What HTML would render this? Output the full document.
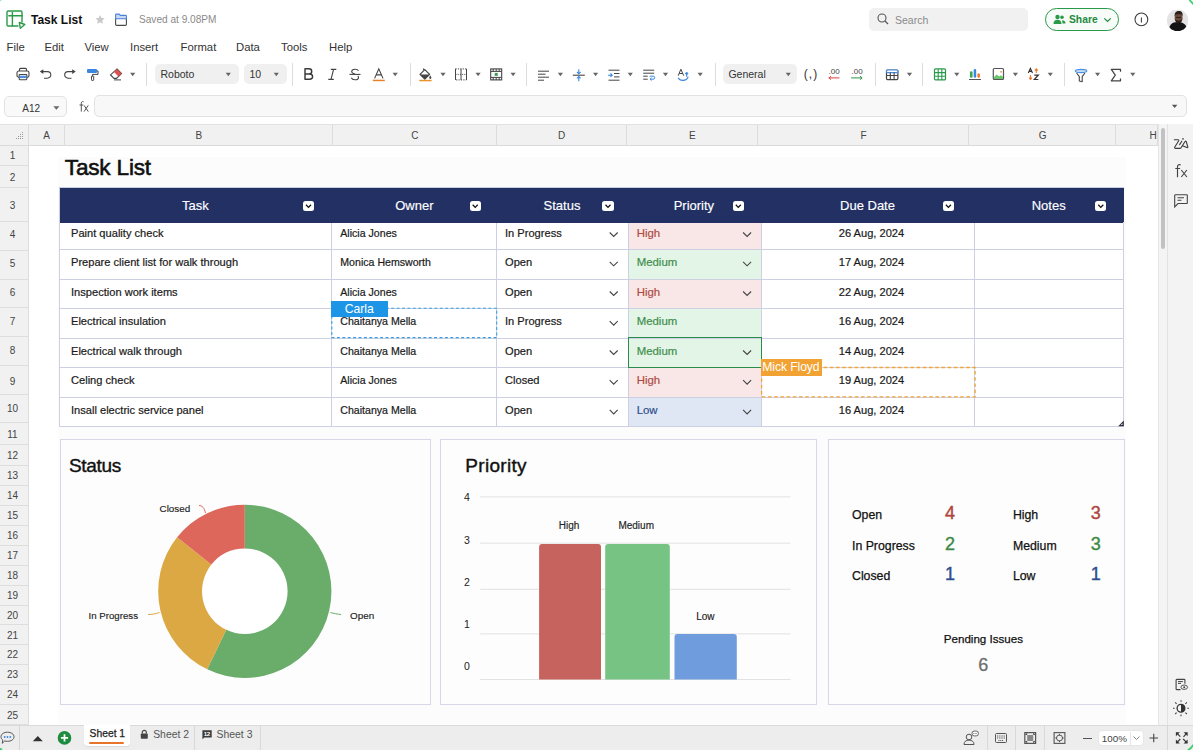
<!DOCTYPE html>
<html><head><meta charset="utf-8">
<style>
*{margin:0;padding:0;box-sizing:border-box}
html,body{width:1193px;height:750px;overflow:hidden;background:#fff;font-family:"Liberation Sans",sans-serif;color:#222}
.a{position:absolute}
.t{position:absolute;white-space:nowrap;line-height:1}
svg{position:absolute;overflow:visible}
.menu{font-size:11.3px;color:#333}
.rh{position:absolute;left:0;width:28px;background:#f1f1f1;border-bottom:1px solid #dedede;font-size:10px;color:#555;text-align:center}
.ch{position:absolute;top:125px;height:20px;background:#f1f1f1;border-right:1px solid #dcdcdc;border-bottom:1px solid #dcdcdc;font-size:10px;color:#444;text-align:center;line-height:20px}
.cell{position:absolute;font-size:11.1px;color:#1a1a1a;white-space:nowrap;line-height:1;-webkit-text-stroke:0.2px currentColor}
.hdr{position:absolute;top:197px;font-size:13px;color:#fff;white-space:nowrap;line-height:1;text-align:center}
.flt{position:absolute;top:201px;width:11px;height:10px;background:#fff;border-radius:2px}
.dd{position:absolute;width:9px;height:5px}
</style></head><body>

<!-- ===== TITLE BAR ===== -->
<svg style="left:5px;top:9px" width="22" height="22" viewBox="0.000 0.000 22.000 22.000">
 <path d="M13 17H3.2C2.5 17 2 16.5 2 15.8V3.2C2 2.5 2.5 2 3.2 2H15.8C16.5 2 17 2.5 17 3.2V13" fill="none" stroke="#2a9a4a" stroke-width="1.4" stroke-linecap="round"/>
 <path d="M7.4 3V17.5M3.3 6.7H17.8" fill="none" stroke="#2a9a4a" stroke-width="1.4"/>
 <path d="M14.3 13.5L19.8 15.5L15.3 19.2Z" fill="none" stroke="#2a9a4a" stroke-width="1.4" stroke-linejoin="round"/>
</svg>
<div class="t" style="left:31px;top:13.5px;font-size:12px;font-weight:bold;color:#111">Task List</div>
<svg style="left:94px;top:14px" width="12" height="11" viewBox="-1.811 -0.679 27.170 24.906"><path d="M12 1.5l3.2 6.8 7.3.9-5.4 5 1.4 7.3L12 17.9l-6.5 3.6 1.4-7.3-5.4-5 7.3-.9z" fill="#c9c9c9"/></svg>
<svg style="left:115px;top:13px" width="12" height="13" viewBox="0.000 -0.500 12.000 13.000"><path d="M0.6 5.2V10.8Q0.6 11.9 1.7 11.9H10.3Q11.4 11.9 11.4 10.8V5.2" fill="none" stroke="#4a4a4a" stroke-width="1.1"/><path d="M0.6 5.2V1.4Q0.6 0.6 1.4 0.6H4.2L5.3 1.9H10.6Q11.4 1.9 11.4 2.7V5.2Z" fill="#c7d8f4" stroke="#4a80d8" stroke-width="1.1" stroke-linejoin="round"/></svg>
<div class="t" style="left:139px;top:15px;font-size:10.1px;color:#8a8a8a">Saved at 9.08PM</div>

<div class="a" style="left:869px;top:8px;width:159px;height:23px;background:#f1f1f1;border-radius:5px"></div>
<svg style="left:877px;top:13px" width="12" height="12" viewBox="0.000 0.000 12.000 12.000"><circle cx="5" cy="5" r="4" fill="none" stroke="#555" stroke-width="1.1"/><path d="M8 8L11 11" stroke="#555" stroke-width="1.2"/></svg>
<div class="t" style="left:895px;top:15px;font-size:10.5px;color:#8a8a8a">Search</div>

<div class="a" style="left:1045px;top:8px;width:74px;height:23px;border:1px solid #2a9a4a;border-radius:12px;background:#f7fcf8"></div>
<svg style="left:1053px;top:14px" width="13" height="11" viewBox="0.000 0.000 13.000 11.000"><circle cx="4.5" cy="3" r="2.2" fill="#2a9a4a"/><path d="M0.5 10C0.5 7 2.2 5.8 4.5 5.8S8.5 7 8.5 10Z" fill="#2a9a4a"/><circle cx="9" cy="3.3" r="1.8" fill="#2a9a4a"/><path d="M9 6.2C11 6.2 12.5 7.2 12.5 9.6H9.6" fill="#2a9a4a"/></svg>
<div class="t" style="left:1069px;top:14.8px;font-size:10.3px;font-weight:bold;color:#1f8a40">Share</div>
<svg style="left:1103px;top:17px" width="9" height="6" viewBox="-0.500 -0.500 9.000 6.000"><path d="M0.8 0.8L4 4L7.2 0.8" fill="none" stroke="#1f8a40" stroke-width="1.2"/></svg>

<svg style="left:1134px;top:12px" width="15" height="15" viewBox="-0.400 -0.400 15.000 15.000"><circle cx="7" cy="7" r="6.4" fill="none" stroke="#3a3a3a" stroke-width="1.05"/><path d="M7 5V10.2" stroke="#3a3a3a" stroke-width="1.05"/></svg>
<svg style="left:1166px;top:9px" width="23" height="23" viewBox="-0.800 -0.600 23.000 23.000"><defs><clipPath id="av"><circle cx="10.75" cy="10.75" r="10.75"/></clipPath></defs><g clip-path="url(#av)"><rect width="21.5" height="21.5" fill="#e4e4e4"/><path d="M2 22C2 15.5 5 12.5 10.5 12.5C15.5 12.5 19 14.5 20 18L21.5 22Z" fill="#141414"/><ellipse cx="11.8" cy="8.3" rx="4" ry="5" fill="#6b4a3c"/><path d="M7.8 7C7.6 3.2 9.5 1.5 12 1.5C14.8 1.5 16.3 3.3 15.8 7L15 5.2C13.5 4.6 10 4.6 8.6 5.3Z" fill="#2a1f1a"/><path d="M8.2 9.5C8.6 12.5 10 13.6 11.8 13.6C13.6 13.6 15 12.5 15.4 9.5C14.5 10.8 13 11.2 11.8 11.2C10.6 11.2 9.1 10.8 8.2 9.5Z" fill="#2a1d18"/><rect x="9.3" y="7.3" width="5" height="1" fill="#2a1f1a"/></g></svg>

<!-- ===== MENU ===== -->
<div class="t menu" style="left:6.5px;top:41.8px">File</div>
<div class="t menu" style="left:44.5px;top:41.8px">Edit</div>
<div class="t menu" style="left:84.5px;top:41.8px">View</div>
<div class="t menu" style="left:130px;top:41.8px">Insert</div>
<div class="t menu" style="left:180.5px;top:41.8px">Format</div>
<div class="t menu" style="left:236px;top:41.8px">Data</div>
<div class="t menu" style="left:281px;top:41.8px">Tools</div>
<div class="t menu" style="left:329px;top:41.8px">Help</div>

<!-- TOOLBAR -->
<svg style="left:16px;top:67px" width="14" height="15" viewBox="0.000 -0.200 14.000 15.000"><path d="M3.5 3.8V2.2Q3.5 1.2 4.5 1.2H9.5Q10.5 1.2 10.5 2.2V3.8" fill="none" stroke="#444" stroke-width="1.1"/><rect x="1" y="3.8" width="12" height="6.2" rx="1.8" fill="none" stroke="#444" stroke-width="1.1"/><rect x="3.2" y="7.3" width="7.6" height="5.2" rx=".6" fill="#fff" stroke="#444" stroke-width="1.1"/><rect x="3.8" y="8.5" width="6.4" height="2.4" fill="#4a8fe0"/></svg>
<svg style="left:39px;top:67px" width="14" height="15" viewBox="0.000 -0.800 14.000 15.000"><path d="M3.5 3.8H8.5A3.3 3.3 0 0 1 8.5 10.4H5" fill="none" stroke="#444" stroke-width="1.1"/><path d="M0.8 3.8L4.3 1.5V6.1Z" fill="#444"/></svg>
<svg style="left:62px;top:67px" width="15" height="15" viewBox="-0.500 -0.800 15.000 15.000"><path d="M10.5 3.8H5.5A3.3 3.3 0 0 0 5.5 10.4H9" fill="none" stroke="#444" stroke-width="1.1"/><path d="M13.2 3.8L9.7 1.5V6.1Z" fill="#444"/></svg>
<svg style="left:85px;top:67px" width="15" height="15" viewBox="-0.500 -0.400 15.000 15.000"><rect x="1.5" y="1.5" width="10" height="4" rx="1" fill="#3a86e0"/><path d="M11.5 3.5H12.5V7H7V9" fill="none" stroke="#444" stroke-width="1"/><rect x="6" y="8.5" width="2.2" height="4.5" rx=".6" fill="none" stroke="#444" stroke-width="1"/></svg>
<svg style="left:109px;top:67px" width="14" height="15" viewBox="0.000 -0.400 14.000 15.000"><path d="M8 1.5L12.5 6L7.5 11H5L1.5 7.5Z" fill="none" stroke="#444" stroke-width="1.1"/><path d="M8 1.5L12.5 6L9.5 9L5 4.5Z" fill="#e05050"/><path d="M5 12.5H12" stroke="#444" stroke-width="1"/></svg>
<svg style="left:130px;top:72px" width="6" height="5" viewBox="-0.100 -0.800 6.000 5.000"><path d="M0 0H5.2L2.6 3.4Z" fill="#666"/></svg>
<div class="a" style="left:146.0px;top:62.5px;width:1px;height:23px;background:#dcdcdc"></div>
<div class="a" style="left:154.6px;top:64.3px;width:84.5px;height:19.7px;background:#f0f0f0;border-radius:5px"></div>
<div class="t" style="left:160.5px;top:69px;font-size:10.5px;color:#333">Roboto</div>
<svg style="left:225px;top:72px" width="6" height="5" viewBox="-0.700 -0.800 6.000 5.000"><path d="M0 0H5.2L2.6 3.4Z" fill="#666"/></svg>
<div class="a" style="left:244px;top:64.3px;width:42.6px;height:19.7px;background:#f0f0f0;border-radius:5px"></div>
<div class="t" style="left:249.5px;top:69px;font-size:10.5px;color:#333">10</div>
<svg style="left:273px;top:72px" width="6" height="5" viewBox="-0.700 -0.800 6.000 5.000"><path d="M0 0H5.2L2.6 3.4Z" fill="#666"/></svg>
<div class="a" style="left:291.5px;top:62.5px;width:1px;height:23px;background:#dcdcdc"></div>
<svg style="left:301px;top:66px" width="15" height="15" viewBox="-0.600 -0.900 15.000 15.000"><path d="M3.4 1.9H7.4Q10.1 1.9 10.1 4.5Q10.1 7 7.4 7H3.4ZM3.4 7H8Q11 7 11 9.7Q11 12.4 8 12.4H3.4Z" fill="none" stroke="#3a3a3a" stroke-width="1.45" stroke-linejoin="round"/></svg>
<svg style="left:325px;top:67px" width="15" height="15" viewBox="-0.300 -0.400 15.000 15.000"><path d="M5.5 2H11M3 12H8.5M8.3 2L5.7 12" fill="none" stroke="#444" stroke-width="1.1"/></svg>
<svg style="left:348px;top:67px" width="14" height="15" viewBox="0.000 -0.400 14.000 15.000"><path d="M10.5 3.5C10 2.3 8.8 1.8 7 1.8C5 1.8 3.7 2.8 3.7 4.2C3.7 5.5 4.8 6.2 7 6.6" fill="none" stroke="#444" stroke-width="1.1"/><path d="M1.5 7H12.5" stroke="#444" stroke-width="1.1"/><path d="M9.8 8.5C10.3 9 10.5 9.5 10.5 10C10.5 11.4 9.2 12.3 7 12.3C5 12.3 3.8 11.6 3.3 10.4" fill="none" stroke="#444" stroke-width="1.1"/></svg>
<svg style="left:371px;top:67px" width="15" height="15" viewBox="-0.800 -0.400 15.000 15.000"><path d="M2.8 11L7 1.5L11.2 11M4.3 7.5H9.7" fill="none" stroke="#444" stroke-width="1.1"/><rect x="1" y="12.3" width="12" height="1.5" fill="#e8822a"/></svg>
<svg style="left:392px;top:72px" width="6" height="5" viewBox="-0.600 -0.800 6.000 5.000"><path d="M0 0H5.2L2.6 3.4Z" fill="#666"/></svg>
<div class="a" style="left:409.5px;top:62.5px;width:1px;height:23px;background:#dcdcdc"></div>
<svg style="left:418px;top:67px" width="15" height="15" viewBox="-0.800 -0.400 15.000 15.000"><path d="M4.2 1.2L5.6 2.6" stroke="#444" stroke-width="1.1"/><path d="M1.2 7L6 2.2L10.8 7L6 11.8Z" fill="none" stroke="#444" stroke-width="1.2" stroke-linejoin="round"/><path d="M1.2 7H10.8L6 11.8Z" fill="#444"/><path d="M11.5 8.2C12.4 9.4 12.6 10 12.6 10.4A1.1 1.1 0 0 1 10.4 10.4C10.4 10 10.6 9.4 11.5 8.2Z" fill="#444"/><rect x="0.5" y="12.4" width="12.3" height="1.5" fill="#e8922a"/></svg>
<svg style="left:440px;top:72px" width="6" height="5" viewBox="-0.400 -0.800 6.000 5.000"><path d="M0 0H5.2L2.6 3.4Z" fill="#666"/></svg>
<svg style="left:454px;top:67px" width="14" height="15" viewBox="0.000 -0.400 14.000 15.000"><rect x="1.5" y="1.5" width="11" height="11" fill="none" stroke="#444" stroke-width="1" stroke-dasharray="1.2 1.2"/><path d="M7 1.5V12.5" stroke="#444" stroke-width="1"/><path d="M1.5 7H12.5" stroke="#444" stroke-width="1" stroke-dasharray="1 1.2"/><path d="M1.5 1.5V12.5M12.5 1.5V12.5" stroke="#444" stroke-width="1"/></svg>
<svg style="left:475px;top:72px" width="6" height="5" viewBox="-0.500 -0.800 6.000 5.000"><path d="M0 0H5.2L2.6 3.4Z" fill="#666"/></svg>
<svg style="left:489px;top:67px" width="15" height="15" viewBox="-0.200 -0.400 15.000 15.000"><rect x="1.5" y="1.5" width="11" height="11" fill="none" stroke="#444" stroke-width="1.1"/><path d="M1.5 4H12.5M1.5 10H12.5M4 1.5V4M7 1.5V4M10 1.5V4M4 10V12.5M7 10V12.5M10 10V12.5" stroke="#444" stroke-width="1"/><rect x="5.5" y="5.5" width="3" height="3" fill="#3aa050"/></svg>
<svg style="left:510px;top:72px" width="6" height="5" viewBox="-0.500 -0.800 6.000 5.000"><path d="M0 0H5.2L2.6 3.4Z" fill="#666"/></svg>
<div class="a" style="left:526.4px;top:62.5px;width:1px;height:23px;background:#dcdcdc"></div>
<svg style="left:536px;top:68px" width="15" height="15" viewBox="-0.500 -0.200 15.000 15.000"><path d="M1.5 3H12.5M1.5 6H9M1.5 9H12.5M1.5 12H7.5" stroke="#444" stroke-width="1"/></svg>
<svg style="left:557px;top:72px" width="6" height="5" viewBox="-0.800 -0.800 6.000 5.000"><path d="M0 0H5.2L2.6 3.4Z" fill="#666"/></svg>
<svg style="left:571px;top:68px" width="15" height="15" viewBox="-0.800 -0.200 15.000 15.000"><path d="M1 7H13" stroke="#444" stroke-width="1.1"/><path d="M7 1V5.5M7 8.5V13" stroke="#3a86e0" stroke-width="1.1"/><path d="M5.2 3.8L7 5.6L8.8 3.8M5.2 10.2L7 8.4L8.8 10.2" fill="none" stroke="#3a86e0" stroke-width="1.1"/></svg>
<svg style="left:593px;top:72px" width="6" height="5" viewBox="0.000 -0.800 6.000 5.000"><path d="M0 0H5.2L2.6 3.4Z" fill="#666"/></svg>
<svg style="left:607px;top:68px" width="14" height="15" viewBox="0.000 -0.200 14.000 15.000"><path d="M1.5 2H12.5M7 5.3H12.5M7 8.7H12.5M1.5 12H12.5" stroke="#444" stroke-width="1"/><path d="M1 7H5M3.5 5.3L5.2 7L3.5 8.7" fill="none" stroke="#3a86e0" stroke-width="1.1"/></svg>
<svg style="left:627px;top:72px" width="6" height="5" viewBox="-0.700 -0.800 6.000 5.000"><path d="M0 0H5.2L2.6 3.4Z" fill="#666"/></svg>
<svg style="left:641px;top:68px" width="15" height="15" viewBox="-0.700 -0.200 15.000 15.000"><path d="M1.5 2H12.5M1.5 5H12.5M1.5 8H6M1.5 11H6" stroke="#444" stroke-width="1"/><path d="M8 8H11.5A1.5 1.5 0 0 1 11.5 11H8.5M9.8 9.6L8.3 11L9.8 12.4" fill="none" stroke="#3a86e0" stroke-width="1"/></svg>
<svg style="left:662px;top:72px" width="7" height="5" viewBox="-0.900 -0.800 7.000 5.000"><path d="M0 0H5.2L2.6 3.4Z" fill="#666"/></svg>
<svg style="left:676px;top:68px" width="15" height="15" viewBox="-0.700 -0.200 15.000 15.000"><path d="M1.5 7.5L4.2 1L7 7.5M2.5 5.3H6" fill="none" stroke="#444" stroke-width="1"/><path d="M1.5 9.5C3 13 9.5 13.5 11.5 8.5" fill="none" stroke="#3a86e0" stroke-width="1.1"/><path d="M10 4.5V8.5M8.6 5.8L10 4.3L11.4 5.8" fill="none" stroke="#3a86e0" stroke-width="1.1"/></svg>
<svg style="left:697px;top:72px" width="6" height="5" viewBox="-0.600 -0.800 6.000 5.000"><path d="M0 0H5.2L2.6 3.4Z" fill="#666"/></svg>
<div class="a" style="left:714.6px;top:62.5px;width:1px;height:23px;background:#dcdcdc"></div>
<div class="a" style="left:723.4px;top:64.3px;width:73.6px;height:19.7px;background:#f0f0f0;border-radius:5px"></div>
<div class="t" style="left:728.4px;top:69px;font-size:10.5px;color:#333">General</div>
<svg style="left:785px;top:72px" width="6" height="5" viewBox="-0.700 -0.800 6.000 5.000"><path d="M0 0H5.2L2.6 3.4Z" fill="#666"/></svg>
<div class="t" style="left:803.8px;top:67.5px;font-size:12px;color:#333;letter-spacing:1px">(,)</div>
<svg style="left:826px;top:67px" width="15" height="15" viewBox="-0.500 -0.400 15.000 15.000"><text x="2" y="7" font-size="8" font-family="Liberation Sans" fill="#444">.00</text><path d="M2 10.5H13M4.5 8.8L2.5 10.5L4.5 12.2" fill="none" stroke="#e04040" stroke-width="1"/></svg>
<svg style="left:849px;top:67px" width="15" height="15" viewBox="-0.600 -0.400 15.000 15.000"><text x="2" y="7" font-size="8" font-family="Liberation Sans" fill="#444">.00</text><path d="M1.5 10.5H12.5M10.5 8.8L12.5 10.5L10.5 12.2" fill="none" stroke="#2a9a4a" stroke-width="1"/></svg>
<div class="a" style="left:875.0px;top:62.5px;width:1px;height:23px;background:#dcdcdc"></div>
<svg style="left:885px;top:69px" width="14" height="12" viewBox="-0.700 0.000 14.000 12.000"><rect x="0.8" y="1" width="11.4" height="9.6" rx="1" fill="none" stroke="#444" stroke-width="1.2"/><rect x="0.8" y="1" width="11.4" height="2.6" rx="1" fill="#fff" stroke="#4a8fe0" stroke-width="1.2"/><path d="M0.8 6.5H12.2M4.6 3.6V10.6M8.4 3.6V10.6" stroke="#444" stroke-width="1.1"/></svg>
<svg style="left:906px;top:72px" width="7" height="5" viewBox="-0.900 -0.800 7.000 5.000"><path d="M0 0H5.2L2.6 3.4Z" fill="#666"/></svg>
<div class="a" style="left:922.2px;top:62.5px;width:1px;height:23px;background:#dcdcdc"></div>
<svg style="left:933px;top:67px" width="14" height="15" viewBox="0.000 -0.400 14.000 15.000"><rect x="1.5" y="1.5" width="11" height="11" rx="1" fill="none" stroke="#2a9a4a" stroke-width="1.2"/><path d="M1.5 5.2H12.5M1.5 8.8H12.5M5.2 1.5V12.5M8.8 1.5V12.5" stroke="#2a9a4a" stroke-width="1.1"/></svg>
<svg style="left:954px;top:72px" width="6" height="5" viewBox="-0.200 -0.800 6.000 5.000"><path d="M0 0H5.2L2.6 3.4Z" fill="#666"/></svg>
<svg style="left:968px;top:67px" width="14" height="15" viewBox="0.000 -0.900 14.000 15.000"><rect x="1.9" y="3.4" width="2.7" height="6.5" rx="1.2" fill="#3aa856"/><rect x="5.7" y="1" width="2.5" height="8.9" rx="1.2" fill="#3a86e0"/><rect x="9.4" y="5.4" width="2.5" height="4.5" rx="1.1" fill="#f07a2a"/><path d="M1 11.6H13" stroke="#555" stroke-width="1"/></svg>
<svg style="left:992px;top:67px" width="13" height="14" viewBox="-0.300 -0.700 13.000 14.000"><rect x="1" y="0.8" width="10.2" height="11" rx="1" fill="none" stroke="#555" stroke-width="1.2"/><path d="M1.5 11.3V9.5L4.5 6.8L6.8 8.9L8.6 7.6L10.7 9V11.3Z" fill="#6cc46c"/><rect x="8" y="3.3" width="1.6" height="1.6" fill="#f0a030"/></svg>
<svg style="left:1012px;top:72px" width="6" height="5" viewBox="-0.800 -0.800 6.000 5.000"><path d="M0 0H5.2L2.6 3.4Z" fill="#666"/></svg>
<svg style="left:1027px;top:67px" width="13" height="14" viewBox="-0.500 -0.800 13.000 14.000"><path d="M0.8 5.2L2.9 0.6L5 5.2M1.6 3.6H4.2" fill="none" stroke="#333" stroke-width="1.1"/><path d="M6.8 7.4H10.8L6.8 11.7H10.8" fill="none" stroke="#333" stroke-width="1.2"/><path d="M8.8 5.2V1.3M7.3 2.8L8.8 1.1L10.3 2.8" fill="none" stroke="#f07a2a" stroke-width="1.1"/><path d="M3 7.3V11.3M1.5 9.8L3 11.5L4.5 9.8" fill="none" stroke="#f07a2a" stroke-width="1.1"/></svg>
<svg style="left:1047px;top:72px" width="6" height="5" viewBox="-0.700 -0.800 6.000 5.000"><path d="M0 0H5.2L2.6 3.4Z" fill="#666"/></svg>
<div class="a" style="left:1063.7px;top:62.5px;width:1px;height:23px;background:#dcdcdc"></div>
<svg style="left:1074px;top:68px" width="14" height="15" viewBox="0.000 -0.400 14.000 15.000"><ellipse cx="7" cy="2.6" rx="5.8" ry="1.6" fill="#c5dcf5" stroke="#4a90e2" stroke-width="1.1"/><path d="M2.6 4.6L5.3 8.2V12.6L8.2 13.3V8.2L10.9 4.6" fill="none" stroke="#444" stroke-width="1.1" stroke-linejoin="round"/></svg>
<svg style="left:1095px;top:72px" width="6" height="5" viewBox="0.000 -0.800 6.000 5.000"><path d="M0 0H5.2L2.6 3.4Z" fill="#666"/></svg>
<svg style="left:1108px;top:67px" width="15" height="15" viewBox="-0.700 -0.600 15.000 15.000"><path d="M11.8 4.2V1.8H2.6L6.6 7.5L2.6 13.2H11.8V10.8" fill="none" stroke="#444" stroke-width="1.25" stroke-linejoin="round"/></svg>
<svg style="left:1130px;top:72px" width="6" height="5" viewBox="-0.200 -0.800 6.000 5.000"><path d="M0 0H5.2L2.6 3.4Z" fill="#666"/></svg>


<!-- FORMULA_PLACEHOLDER -->

<!-- GRID -->
<div class="a" style="left:4.4px;top:96.2px;width:62.3px;height:21px;background:#f9f9f9;border:1px solid #e2e2e2;border-radius:5px"></div>
<div class="t" style="left:22.3px;top:103.5px;font-size:10px;color:#333">A12</div>
<svg style="left:53px;top:106px" width="7" height="4" viewBox="-0.400 -0.300 7.000 4.000"><path d="M0 0H6L3 3.5Z" fill="#666"/></svg>
<svg style="left:79px;top:101px" width="10" height="11" viewBox="0.000 0.000 10.000 11.000"><path d="M4.6 0.7C4.2 0.5 3.7 0.5 3.3 0.6C2.6 0.8 2.3 1.4 2.3 2.3V10.6M0.5 4H4.2" fill="none" stroke="#555" stroke-width="1"/><path d="M5 4.3L9.3 10.6M9.3 4.3L5 10.6" stroke="#555" stroke-width="1"/></svg>
<div class="a" style="left:93.5px;top:95.2px;width:1093.2px;height:21.4px;background:#f8f8f8;border:1px solid #e2e2e2;border-radius:5px"></div>
<svg style="left:1171px;top:104px" width="7" height="5" viewBox="-0.982 -0.848 7.636 5.303"><path d="M0 0H6L3 3.5Z" fill="#555"/></svg>
<div class="a" style="left:0;top:124.4px;width:1157.6px;height:1px;background:#e2e2e2"></div>
<div class="a" style="left:0;top:125.3px;width:1157.6px;height:20.3px;background:#f1f1f1;border-bottom:1px solid #dadada"></div>
<div class="a" style="left:27.7px;top:125.3px;width:1px;height:20.3px;background:#dcdcdc"></div>
<div class="a" style="left:63.7px;top:125.3px;width:1px;height:20.3px;background:#dcdcdc"></div>
<div class="t" style="left:28.7px;width:36.0px;text-align:center;top:130.5px;font-size:10px;color:#444">A</div>
<div class="a" style="left:332.2px;top:125.3px;width:1px;height:20.3px;background:#dcdcdc"></div>
<div class="t" style="left:64.7px;width:268.5px;text-align:center;top:130.5px;font-size:10px;color:#444">B</div>
<div class="a" style="left:495.7px;top:125.3px;width:1px;height:20.3px;background:#dcdcdc"></div>
<div class="t" style="left:333.2px;width:163.5px;text-align:center;top:130.5px;font-size:10px;color:#444">C</div>
<div class="a" style="left:625.8px;top:125.3px;width:1px;height:20.3px;background:#dcdcdc"></div>
<div class="t" style="left:496.7px;width:130.1px;text-align:center;top:130.5px;font-size:10px;color:#444">D</div>
<div class="a" style="left:756.8px;top:125.3px;width:1px;height:20.3px;background:#dcdcdc"></div>
<div class="t" style="left:626.8px;width:131.0px;text-align:center;top:130.5px;font-size:10px;color:#444">E</div>
<div class="a" style="left:968.3px;top:125.3px;width:1px;height:20.3px;background:#dcdcdc"></div>
<div class="t" style="left:757.8px;width:211.5px;text-align:center;top:130.5px;font-size:10px;color:#444">F</div>
<div class="a" style="left:1114.9px;top:125.3px;width:1px;height:20.3px;background:#dcdcdc"></div>
<div class="t" style="left:969.3px;width:146.6px;text-align:center;top:130.5px;font-size:10px;color:#444">G</div>
<div class="a" style="left:1156.6px;top:125.3px;width:1px;height:20.3px;background:#dcdcdc"></div>
<div class="t" style="left:1149.4px;top:130.5px;font-size:10px;color:#444">H</div>
<svg style="left:14px;top:131px" width="10" height="10" viewBox="0.000 0.000 10.000 10.000"><g fill="#999"><rect x="8" y="1" width="1" height="1"/><rect x="6" y="3" width="1" height="1"/><rect x="8" y="3" width="1" height="1"/><rect x="4" y="5" width="1" height="1"/><rect x="6" y="5" width="1" height="1"/><rect x="8" y="5" width="1" height="1"/><rect x="2" y="7" width="1" height="1"/><rect x="4" y="7" width="1" height="1"/><rect x="6" y="7" width="1" height="1"/><rect x="8" y="7" width="1" height="1"/></g></svg>
<div class="a" style="left:0;top:145.6px;width:28.7px;height:580px;background:#f1f1f1;border-right:1px solid #dcdcdc"></div>
<div class="a" style="left:0;top:165.3px;width:28.7px;height:1px;background:#dedede"></div>
<div class="t" style="left:0;width:25px;text-align:center;top:150.7px;font-size:10px;color:#444">1</div>
<div class="a" style="left:0;top:186.7px;width:28.7px;height:1px;background:#dedede"></div>
<div class="t" style="left:0;width:25px;text-align:center;top:172.6px;font-size:10px;color:#444">2</div>
<div class="a" style="left:0;top:221.0px;width:28.7px;height:1px;background:#dedede"></div>
<div class="t" style="left:0;width:25px;text-align:center;top:200.8px;font-size:10px;color:#444">3</div>
<div class="a" style="left:0;top:250.0px;width:28.7px;height:1px;background:#dedede"></div>
<div class="t" style="left:0;width:25px;text-align:center;top:230.3px;font-size:10px;color:#444">4</div>
<div class="a" style="left:0;top:278.7px;width:28.7px;height:1px;background:#dedede"></div>
<div class="t" style="left:0;width:25px;text-align:center;top:259.0px;font-size:10px;color:#444">5</div>
<div class="a" style="left:0;top:307.2px;width:28.7px;height:1px;background:#dedede"></div>
<div class="t" style="left:0;width:25px;text-align:center;top:288.1px;font-size:10px;color:#444">6</div>
<div class="a" style="left:0;top:336.2px;width:28.7px;height:1px;background:#dedede"></div>
<div class="t" style="left:0;width:25px;text-align:center;top:316.9px;font-size:10px;color:#444">7</div>
<div class="a" style="left:0;top:365.4px;width:28.7px;height:1px;background:#dedede"></div>
<div class="t" style="left:0;width:25px;text-align:center;top:346.3px;font-size:10px;color:#444">8</div>
<div class="a" style="left:0;top:393.5px;width:28.7px;height:1px;background:#dedede"></div>
<div class="t" style="left:0;width:25px;text-align:center;top:377.3px;font-size:10px;color:#444">9</div>
<div class="a" style="left:0;top:422.2px;width:28.7px;height:1px;background:#dedede"></div>
<div class="t" style="left:0;width:25px;text-align:center;top:404.3px;font-size:10px;color:#444">10</div>
<div class="a" style="left:0;top:444.4px;width:28.7px;height:1px;background:#dedede"></div>
<div class="t" style="left:0;width:25px;text-align:center;top:429.5px;font-size:10px;color:#444">11</div>
<div class="a" style="left:0;top:465.0px;width:28.7px;height:1px;background:#dedede"></div>
<div class="t" style="left:0;width:25px;text-align:center;top:451.3px;font-size:10px;color:#444">12</div>
<div class="a" style="left:0;top:485.0px;width:28.7px;height:1px;background:#dedede"></div>
<div class="t" style="left:0;width:25px;text-align:center;top:471.2px;font-size:10px;color:#444">13</div>
<div class="a" style="left:0;top:505.0px;width:28.7px;height:1px;background:#dedede"></div>
<div class="t" style="left:0;width:25px;text-align:center;top:491.4px;font-size:10px;color:#444">14</div>
<div class="a" style="left:0;top:525.0px;width:28.7px;height:1px;background:#dedede"></div>
<div class="t" style="left:0;width:25px;text-align:center;top:511.1px;font-size:10px;color:#444">15</div>
<div class="a" style="left:0;top:545.0px;width:28.7px;height:1px;background:#dedede"></div>
<div class="t" style="left:0;width:25px;text-align:center;top:531.3px;font-size:10px;color:#444">16</div>
<div class="a" style="left:0;top:565.0px;width:28.7px;height:1px;background:#dedede"></div>
<div class="t" style="left:0;width:25px;text-align:center;top:551.2px;font-size:10px;color:#444">17</div>
<div class="a" style="left:0;top:585.0px;width:28.7px;height:1px;background:#dedede"></div>
<div class="t" style="left:0;width:25px;text-align:center;top:571.4px;font-size:10px;color:#444">18</div>
<div class="a" style="left:0;top:604.5px;width:28.7px;height:1px;background:#dedede"></div>
<div class="t" style="left:0;width:25px;text-align:center;top:590.6px;font-size:10px;color:#444">19</div>
<div class="a" style="left:0;top:624.2px;width:28.7px;height:1px;background:#dedede"></div>
<div class="t" style="left:0;width:25px;text-align:center;top:610.5px;font-size:10px;color:#444">20</div>
<div class="a" style="left:0;top:644.3px;width:28.7px;height:1px;background:#dedede"></div>
<div class="t" style="left:0;width:25px;text-align:center;top:630.5px;font-size:10px;color:#444">21</div>
<div class="a" style="left:0;top:664.0px;width:28.7px;height:1px;background:#dedede"></div>
<div class="t" style="left:0;width:25px;text-align:center;top:650.4px;font-size:10px;color:#444">22</div>
<div class="a" style="left:0;top:683.7px;width:28.7px;height:1px;background:#dedede"></div>
<div class="t" style="left:0;width:25px;text-align:center;top:670.2px;font-size:10px;color:#444">23</div>
<div class="a" style="left:0;top:703.5px;width:28.7px;height:1px;background:#dedede"></div>
<div class="t" style="left:0;width:25px;text-align:center;top:690.3px;font-size:10px;color:#444">24</div>
<div class="a" style="left:0;top:723.8px;width:28.7px;height:1px;background:#dedede"></div>
<div class="t" style="left:0;width:25px;text-align:center;top:710.5px;font-size:10px;color:#444">25</div>
<div class="a" style="left:1157.6px;top:124px;width:9.8px;height:601px;background:#f4f4f4;border-left:1px solid #e6e6e6"></div>
<div class="a" style="left:1161px;top:127.8px;width:4px;height:121px;background:#c2c2c2;border-radius:2px"></div>
<div class="a" style="left:1167.4px;top:124px;width:26px;height:626px;background:#f3f3f3;border-left:1px solid #e2e2e2"></div>


<!-- TABLE -->
<div class="a" style="left:58px;top:157.4px;width:1068.3px;height:567px;background:#fcfcfd"></div>
<div class="t" style="left:64.8px;top:157px;font-size:22.6px;letter-spacing:-0.2px;color:#111;-webkit-text-stroke:0.6px #111">Task List</div>
<div class="a" style="left:59px;top:187px;width:1064.5px;height:1px;background:#c9cde0"></div>
<div class="a" style="left:60px;top:188px;width:1063.5px;height:34.7px;background:#223064"></div>
<div class="t" style="left:135.3px;width:120px;text-align:center;top:198.8px;font-size:13px;color:#fff;-webkit-text-stroke:0.15px #fff">Task</div>
<div class="a" style="left:302.8px;top:201.2px;width:11.4px;height:10px;background:#fff;border-radius:2.5px"></div>
<svg style="left:305px;top:204px" width="7" height="5" viewBox="-0.500 -0.200 7.000 5.000"><path d="M0.5 0.6L3 3.2L5.5 0.6" fill="none" stroke="#111" stroke-width="1.3"/></svg>
<div class="t" style="left:354.4px;width:120px;text-align:center;top:198.8px;font-size:13px;color:#fff;-webkit-text-stroke:0.15px #fff">Owner</div>
<div class="a" style="left:469.5px;top:201.2px;width:11.4px;height:10px;background:#fff;border-radius:2.5px"></div>
<svg style="left:472px;top:204px" width="7" height="5" viewBox="-0.200 -0.200 7.000 5.000"><path d="M0.5 0.6L3 3.2L5.5 0.6" fill="none" stroke="#111" stroke-width="1.3"/></svg>
<div class="t" style="left:502.0px;width:120px;text-align:center;top:198.8px;font-size:13px;color:#fff;-webkit-text-stroke:0.15px #fff">Status</div>
<div class="a" style="left:602.3px;top:201.2px;width:11.4px;height:10px;background:#fff;border-radius:2.5px"></div>
<svg style="left:605px;top:204px" width="6" height="5" viewBox="0.000 -0.200 6.000 5.000"><path d="M0.5 0.6L3 3.2L5.5 0.6" fill="none" stroke="#111" stroke-width="1.3"/></svg>
<div class="t" style="left:633.9px;width:120px;text-align:center;top:198.8px;font-size:13px;color:#fff;-webkit-text-stroke:0.15px #fff">Priority</div>
<div class="a" style="left:732.6px;top:201.2px;width:11.4px;height:10px;background:#fff;border-radius:2.5px"></div>
<svg style="left:735px;top:204px" width="7" height="5" viewBox="-0.300 -0.200 7.000 5.000"><path d="M0.5 0.6L3 3.2L5.5 0.6" fill="none" stroke="#111" stroke-width="1.3"/></svg>
<div class="t" style="left:807.5px;width:120px;text-align:center;top:198.8px;font-size:13px;color:#fff;-webkit-text-stroke:0.15px #fff">Due Date</div>
<div class="a" style="left:942.7px;top:201.2px;width:11.4px;height:10px;background:#fff;border-radius:2.5px"></div>
<svg style="left:945px;top:204px" width="7" height="5" viewBox="-0.400 -0.200 7.000 5.000"><path d="M0.5 0.6L3 3.2L5.5 0.6" fill="none" stroke="#111" stroke-width="1.3"/></svg>
<div class="t" style="left:988.7px;width:120px;text-align:center;top:198.8px;font-size:13px;color:#fff;-webkit-text-stroke:0.15px #fff">Notes</div>
<div class="a" style="left:1095.1px;top:201.2px;width:11.4px;height:10px;background:#fff;border-radius:2.5px"></div>
<svg style="left:1097px;top:204px" width="7" height="5" viewBox="-0.800 -0.200 7.000 5.000"><path d="M0.5 0.6L3 3.2L5.5 0.6" fill="none" stroke="#111" stroke-width="1.3"/></svg>
<div class="a" style="left:59px;top:188px;width:1px;height:238.5px;background:#cdd0e2"></div>
<div class="a" style="left:60px;top:222.7px;width:1062.5px;height:203.8px;background:#fff"></div>
<div class="a" style="left:1122.5px;top:222.4px;width:1px;height:204.1px;background:#cdd0e2"></div>
<div class="a" style="left:628.8px;top:222.5px;width:132.4px;height:27.3px;background:#f9e6e6"></div>
<div class="a" style="left:628.8px;top:249.8px;width:132.4px;height:29.7px;background:#e2f5e6"></div>
<div class="a" style="left:628.8px;top:279.5px;width:132.4px;height:29.0px;background:#f9e6e6"></div>
<div class="a" style="left:628.8px;top:308.5px;width:132.4px;height:30.0px;background:#e2f5e6"></div>
<div class="a" style="left:628.8px;top:338.5px;width:132.4px;height:29.0px;background:#e2f5e6"></div>
<div class="a" style="left:628.8px;top:367.5px;width:132.4px;height:29.5px;background:#f9e6e6"></div>
<div class="a" style="left:628.8px;top:397.0px;width:132.4px;height:29.5px;background:#dfe7f5"></div>
<div class="a" style="left:59px;top:249.3px;width:1064.5px;height:1px;background:#cdd0e2"></div>
<div class="a" style="left:59px;top:279.0px;width:1064.5px;height:1px;background:#cdd0e2"></div>
<div class="a" style="left:59px;top:308.0px;width:1064.5px;height:1px;background:#cdd0e2"></div>
<div class="a" style="left:59px;top:338.0px;width:1064.5px;height:1px;background:#cdd0e2"></div>
<div class="a" style="left:59px;top:367.0px;width:1064.5px;height:1px;background:#cdd0e2"></div>
<div class="a" style="left:59px;top:396.5px;width:1064.5px;height:1px;background:#cdd0e2"></div>
<div class="a" style="left:59px;top:426.0px;width:1064.5px;height:1px;background:#cdd0e2"></div>
<div class="a" style="left:331.2px;top:222.5px;width:1px;height:203.8px;background:#cdd0e2"></div>
<div class="a" style="left:496.2px;top:222.5px;width:1px;height:203.8px;background:#cdd0e2"></div>
<div class="a" style="left:627.8px;top:222.5px;width:1px;height:203.8px;background:#cdd0e2"></div>
<div class="a" style="left:760.7px;top:222.5px;width:1px;height:203.8px;background:#cdd0e2"></div>
<div class="a" style="left:974.4px;top:222.5px;width:1px;height:203.8px;background:#cdd0e2"></div>
<div class="cell" style="left:71px;top:227.8px">Paint quality check</div>
<div class="cell" style="left:340.3px;top:227.8px;font-size:10.6px">Alicia Jones</div>
<div class="cell" style="left:505px;top:227.8px">In Progress</div>
<div class="cell" style="left:636.7px;top:227.5px;font-size:11.4px;color:#ad4a44">High</div>
<div class="cell" style="left:811.5px;width:120px;text-align:center;top:227.8px">26 Aug, 2024</div>
<svg style="left:609px;top:232px" width="10" height="5" viewBox="-0.200 0.000 10.000 5.000"><path d="M0.5 0.5L4.5 4.5L8.5 0.5" fill="none" stroke="#444" stroke-width="1.1"/></svg>
<svg style="left:742px;top:232px" width="10" height="5" viewBox="-0.600 0.000 10.000 5.000"><path d="M0.5 0.5L4.5 4.5L8.5 0.5" fill="none" stroke="#444" stroke-width="1.1"/></svg>
<div class="cell" style="left:71px;top:257.1px">Prepare client list for walk through</div>
<div class="cell" style="left:340.3px;top:257.1px;font-size:10.6px">Monica Hemsworth</div>
<div class="cell" style="left:505px;top:257.1px">Open</div>
<div class="cell" style="left:636.7px;top:256.8px;font-size:11.4px;color:#3e8e4c">Medium</div>
<div class="cell" style="left:811.5px;width:120px;text-align:center;top:257.1px">17 Aug, 2024</div>
<svg style="left:609px;top:261px" width="10" height="6" viewBox="-0.200 -0.300 10.000 6.000"><path d="M0.5 0.5L4.5 4.5L8.5 0.5" fill="none" stroke="#444" stroke-width="1.1"/></svg>
<svg style="left:742px;top:261px" width="10" height="6" viewBox="-0.600 -0.300 10.000 6.000"><path d="M0.5 0.5L4.5 4.5L8.5 0.5" fill="none" stroke="#444" stroke-width="1.1"/></svg>
<div class="cell" style="left:71px;top:286.8px">Inspection work items</div>
<div class="cell" style="left:340.3px;top:286.8px;font-size:10.6px">Alicia Jones</div>
<div class="cell" style="left:505px;top:286.8px">Open</div>
<div class="cell" style="left:636.7px;top:286.5px;font-size:11.4px;color:#ad4a44">High</div>
<div class="cell" style="left:811.5px;width:120px;text-align:center;top:286.8px">22 Aug, 2024</div>
<svg style="left:609px;top:291px" width="10" height="5" viewBox="-0.200 0.000 10.000 5.000"><path d="M0.5 0.5L4.5 4.5L8.5 0.5" fill="none" stroke="#444" stroke-width="1.1"/></svg>
<svg style="left:742px;top:291px" width="10" height="5" viewBox="-0.600 0.000 10.000 5.000"><path d="M0.5 0.5L4.5 4.5L8.5 0.5" fill="none" stroke="#444" stroke-width="1.1"/></svg>
<div class="cell" style="left:71px;top:316.4px">Electrical insulation</div>
<div class="cell" style="left:340.3px;top:316.4px;font-size:10.6px">Chaitanya Mella</div>
<div class="cell" style="left:505px;top:316.4px">In Progress</div>
<div class="cell" style="left:636.7px;top:316.1px;font-size:11.4px;color:#3e8e4c">Medium</div>
<div class="cell" style="left:811.5px;width:120px;text-align:center;top:316.4px">16 Aug, 2024</div>
<svg style="left:609px;top:320px" width="10" height="6" viewBox="-0.200 -0.600 10.000 6.000"><path d="M0.5 0.5L4.5 4.5L8.5 0.5" fill="none" stroke="#444" stroke-width="1.1"/></svg>
<div class="cell" style="left:71px;top:345.8px">Electrical walk through</div>
<div class="cell" style="left:340.3px;top:345.8px;font-size:10.6px">Chaitanya Mella</div>
<div class="cell" style="left:505px;top:345.8px">Open</div>
<div class="cell" style="left:636.7px;top:345.5px;font-size:11.4px;color:#3e8e4c">Medium</div>
<div class="cell" style="left:811.5px;width:120px;text-align:center;top:345.8px">14 Aug, 2024</div>
<svg style="left:609px;top:350px" width="10" height="5" viewBox="-0.200 0.000 10.000 5.000"><path d="M0.5 0.5L4.5 4.5L8.5 0.5" fill="none" stroke="#444" stroke-width="1.1"/></svg>
<svg style="left:742px;top:350px" width="10" height="5" viewBox="-0.600 0.000 10.000 5.000"><path d="M0.5 0.5L4.5 4.5L8.5 0.5" fill="none" stroke="#444" stroke-width="1.1"/></svg>
<div class="cell" style="left:71px;top:375.4px">Celing check</div>
<div class="cell" style="left:340.3px;top:375.4px;font-size:10.6px">Alicia Jones</div>
<div class="cell" style="left:505px;top:375.4px">Closed</div>
<div class="cell" style="left:636.7px;top:375.1px;font-size:11.4px;color:#ad4a44">High</div>
<div class="cell" style="left:811.5px;width:120px;text-align:center;top:375.4px">19 Aug, 2024</div>
<svg style="left:609px;top:379px" width="10" height="6" viewBox="-0.200 -0.600 10.000 6.000"><path d="M0.5 0.5L4.5 4.5L8.5 0.5" fill="none" stroke="#444" stroke-width="1.1"/></svg>
<svg style="left:742px;top:379px" width="10" height="6" viewBox="-0.600 -0.600 10.000 6.000"><path d="M0.5 0.5L4.5 4.5L8.5 0.5" fill="none" stroke="#444" stroke-width="1.1"/></svg>
<div class="cell" style="left:71px;top:405.2px">Insall electric service panel</div>
<div class="cell" style="left:340.3px;top:405.2px;font-size:10.6px">Chaitanya Mella</div>
<div class="cell" style="left:505px;top:405.2px">Open</div>
<div class="cell" style="left:636.7px;top:404.9px;font-size:11.4px;color:#2f4f8f">Low</div>
<div class="cell" style="left:811.5px;width:120px;text-align:center;top:405.2px">16 Aug, 2024</div>
<svg style="left:609px;top:409px" width="10" height="6" viewBox="-0.200 -0.400 10.000 6.000"><path d="M0.5 0.5L4.5 4.5L8.5 0.5" fill="none" stroke="#444" stroke-width="1.1"/></svg>
<svg style="left:742px;top:409px" width="10" height="6" viewBox="-0.600 -0.400 10.000 6.000"><path d="M0.5 0.5L4.5 4.5L8.5 0.5" fill="none" stroke="#444" stroke-width="1.1"/></svg>
<div class="a" style="left:627.8px;top:337.3px;width:134px;height:30.5px;border:1.5px solid #2c8a4c"></div>
<svg style="left:0;top:0" width="1193" height="750" viewBox="0 0 1193 750"><rect x="331.8" y="308.3" width="164.9" height="29.3" fill="none" stroke="#3a9ee0" stroke-width="1.1" stroke-dasharray="3 2.4"/><rect x="761.6" y="367.5" width="213.5" height="29.4" fill="none" stroke="#f0a43a" stroke-width="1.3" stroke-dasharray="3.6 2.6"/></svg>
<div class="a" style="left:331.3px;top:301.1px;width:56.7px;height:15.5px;background:#1d95e6"></div>
<div class="t" style="left:344.7px;top:302.6px;font-size:12.2px;color:#fff">Carla</div>
<div class="a" style="left:761px;top:359px;width:61.4px;height:17px;background:#f2a232"></div>
<div class="t" style="left:762.3px;top:360.8px;font-size:12.2px;letter-spacing:-0.1px;color:#fff">Mick Floyd</div>
<svg style="left:1118px;top:420px" width="7" height="7" viewBox="-0.200 0.000 7.000 7.000"><path d="M0 6.3L5.6 0.5V6.3Z" fill="#2a2e40"/><path d="M2.6 5L4.3 3.3V5Z" fill="#fff"/></svg>


<!-- CHARTS -->
<div class="a" style="left:60px;top:439px;width:371px;height:266px;background:#fdfdfd;border:1px solid #d6d8e8"></div>
<div class="a" style="left:440px;top:439px;width:377px;height:266px;background:#fdfdfd;border:1px solid #d6d8e8"></div>
<div class="a" style="left:828px;top:439px;width:297px;height:266px;background:#fdfdfd;border:1px solid #d6d8e8"></div>
<div class="t" style="left:69px;top:456.4px;font-size:19px;color:#111;letter-spacing:-0.3px;-webkit-text-stroke:0.4px #111">Status</div>
<svg style="left:0;top:0" width="1193" height="750" viewBox="0 0 1193 750"><circle cx="244.8" cy="591.3" r="43.3" fill="#fff"/><path d="M244.80 504.70A86.6 86.6 0 1 1 207.23 669.32L226.23 629.86A42.8 42.8 0 1 0 244.80 548.50Z" fill="#6aad6b"/><path d="M207.23 669.32A86.6 86.6 0 0 1 177.09 537.31L211.34 564.61A42.8 42.8 0 0 0 226.23 629.86Z" fill="#dba843"/><path d="M177.09 537.31A86.6 86.6 0 0 1 244.80 504.70L244.80 548.50A42.8 42.8 0 0 0 211.34 564.61Z" fill="#de675c"/><path d="M199 505.5C202 505.5 204.5 508 205.5 513" fill="none" stroke="#de675c" stroke-width="1"/><path d="M148 614.5C152 614.5 155 614 159.5 612.5" fill="none" stroke="#dba843" stroke-width="1"/><path d="M330.5 612.5C334 613.5 337 614 341 614.5" fill="none" stroke="#6aad6b" stroke-width="1"/></svg>
<div class="t" style="left:159.5px;top:503.8px;font-size:9.9px;color:#222;-webkit-text-stroke:0.15px #222">Closed</div>
<div class="t" style="left:88.5px;top:611.3px;font-size:9.7px;color:#222;-webkit-text-stroke:0.15px #222">In Progress</div>
<div class="t" style="left:350px;top:611.3px;font-size:9.9px;color:#222;-webkit-text-stroke:0.15px #222">Open</div>
<div class="t" style="left:465.3px;top:456.4px;font-size:19px;color:#111;letter-spacing:0.3px;-webkit-text-stroke:0.4px #111">Priority</div>
<svg style="left:0;top:0" width="1193" height="750" viewBox="0 0 1193 750"><path d="M480.3 496.9H790.5" stroke="#e2e2e2" stroke-width="1"/><path d="M480.3 543.2H790.5" stroke="#e2e2e2" stroke-width="1"/><path d="M480.3 589.3H790.5" stroke="#e2e2e2" stroke-width="1"/><path d="M480.3 633.9H790.5" stroke="#e2e2e2" stroke-width="1"/><path d="M480.3 679.5H790.5" stroke="#e2e2e2" stroke-width="1"/><path d="M539.1 679.5V547.1Q539.1 544.1 542.1 544.1H598Q601 544.1 601 547.1V679.5Z" fill="#c7635f"/><path d="M605.2 679.5V547.1Q605.2 544.1 608.2 544.1H666.8Q669.8 544.1 669.8 547.1V679.5Z" fill="#76c384"/><path d="M674.5 679.5V636.9Q674.5 633.9 677.5 633.9H733.8Q736.8 633.9 736.8 636.9V679.5Z" fill="#6f9cdc"/></svg>
<div class="t" style="left:464px;top:492.2px;font-size:10.5px;color:#222">4</div>
<div class="t" style="left:464px;top:534.7px;font-size:10.5px;color:#222">3</div>
<div class="t" style="left:464px;top:577.3px;font-size:10.5px;color:#222">2</div>
<div class="t" style="left:464px;top:619.1px;font-size:10.5px;color:#222">1</div>
<div class="t" style="left:464px;top:661.2px;font-size:10.5px;color:#222">0</div>
<div class="t" style="left:529px;width:80px;text-align:center;top:521.0px;font-size:10px;color:#222;-webkit-text-stroke:0.15px #222">High</div>
<div class="t" style="left:596.2px;width:80px;text-align:center;top:521.0px;font-size:10px;color:#222;-webkit-text-stroke:0.15px #222">Medium</div>
<div class="t" style="left:665.4px;width:80px;text-align:center;top:611.5px;font-size:10px;color:#222;-webkit-text-stroke:0.15px #222">Low</div>
<div class="t" style="left:852px;top:508.8px;font-size:12.3px;color:#111;-webkit-text-stroke:0.25px #111">Open</div>
<div class="t" style="left:852px;top:539.7px;font-size:12.3px;color:#111;-webkit-text-stroke:0.25px #111">In Progress</div>
<div class="t" style="left:852px;top:569.9px;font-size:12.3px;color:#111;-webkit-text-stroke:0.25px #111">Closed</div>
<div class="t" style="left:1012.9px;top:508.8px;font-size:12.3px;color:#111;-webkit-text-stroke:0.25px #111">High</div>
<div class="t" style="left:1012.9px;top:539.7px;font-size:12.3px;color:#111;-webkit-text-stroke:0.25px #111">Medium</div>
<div class="t" style="left:1012.9px;top:569.9px;font-size:12.3px;color:#111;-webkit-text-stroke:0.25px #111">Low</div>
<div class="t" style="left:940px;width:20px;text-align:center;top:504.0px;font-size:18px;color:#b0443e;-webkit-text-stroke:0.4px #b0443e">4</div>
<div class="t" style="left:940px;width:20px;text-align:center;top:534.9px;font-size:18px;color:#3d8a47;-webkit-text-stroke:0.4px #3d8a47">2</div>
<div class="t" style="left:940px;width:20px;text-align:center;top:565.1px;font-size:18px;color:#2c4d8e;-webkit-text-stroke:0.4px #2c4d8e">1</div>
<div class="t" style="left:1085.8px;width:20px;text-align:center;top:504.0px;font-size:18px;color:#b0443e;-webkit-text-stroke:0.4px #b0443e">3</div>
<div class="t" style="left:1085.8px;width:20px;text-align:center;top:534.9px;font-size:18px;color:#3d8a47;-webkit-text-stroke:0.4px #3d8a47">3</div>
<div class="t" style="left:1085.8px;width:20px;text-align:center;top:565.1px;font-size:18px;color:#2c4d8e;-webkit-text-stroke:0.4px #2c4d8e">1</div>
<div class="t" style="left:933.4px;width:100px;text-align:center;top:632.6px;font-size:11.6px;color:#111;-webkit-text-stroke:0.25px #111">Pending Issues</div>
<div class="t" style="left:973.3px;width:20px;text-align:center;top:656px;font-size:18px;color:#6e6e6e;-webkit-text-stroke:0.3px #6e6e6e">6</div>


<!-- BOTTOM -->
<div class="a" style="left:0;top:724.8px;width:1193px;height:25.2px;background:#ededed;border-top:1px solid #dadada"></div>
<svg style="left:0;top:731px" width="16" height="14" viewBox="0 0 16 14"><path d="M7.5 1.2C11.3 1.2 14 3.2 14 5.8C14 8.4 11.3 10.3 7.5 10.3C6.5 10.3 5.6 10.2 4.8 9.9L2.2 12.3L2.8 9.1C1.6 8.3 1 7.1 1 5.8C1 3.2 3.7 1.2 7.5 1.2Z" fill="none" stroke="#555" stroke-width="1"/><g fill="#3a86e0"><circle cx="4.7" cy="6" r=".9"/><circle cx="7.5" cy="6" r=".9"/><circle cx="10.3" cy="6" r=".9"/></g></svg>
<div class="a" style="left:19.2px;top:725.8px;width:1px;height:24.2px;background:#d6d6d6"></div>
<svg style="left:32px;top:735px" width="11" height="7" viewBox="-0.800 -0.900 11.000 7.000"><path d="M0 5.3L5 0L10 5.3Z" fill="#333"/></svg>
<svg style="left:57px;top:731px" width="15" height="14" viewBox="-0.721 -0.103 15.441 14.412"><circle cx="7" cy="7" r="7" fill="#1e8c3e"/><path d="M7 3.3V10.7M3.3 7H10.7" stroke="#fff" stroke-width="1.8"/></svg>
<div class="a" style="left:83.7px;top:725px;width:46.4px;height:20.5px;background:#fff;border-radius:0 0 4px 4px;box-shadow:0 0.5px 1px rgba(0,0,0,.08)"></div>
<div class="t" style="left:89.6px;top:729.3px;font-size:10.3px;color:#222;-webkit-text-stroke:0.25px #222">Sheet 1</div>
<div class="a" style="left:89.4px;top:742.2px;width:34.6px;height:1.8px;background:#e8742a;border-radius:1px"></div>
<svg style="left:140px;top:729px" width="9" height="10" viewBox="-0.300 -0.500 9.000 10.000"><path d="M2 4V2.8A2 2 0 0 1 6 2.8V4" fill="none" stroke="#444" stroke-width="1.2"/><rect x="0.5" y="4" width="7" height="5.3" rx=".8" fill="#444"/></svg>
<div class="t" style="left:153.2px;top:729.6px;font-size:10.4px;color:#555">Sheet 2</div>
<div class="a" style="left:193.5px;top:726px;width:1px;height:24px;background:#d8d8d8"></div>
<svg style="left:202px;top:730px" width="10" height="10" viewBox="-0.400 -0.200 10.000 10.000"><path d="M0 0H9.3V7.4H2L0 9Z" fill="#3a3a3a"/><text x="1.3" y="6.2" font-size="6.2" font-family="Liberation Sans" font-weight="bold" fill="#fff" letter-spacing="-0.3">12</text></svg>
<div class="t" style="left:216.6px;top:729.6px;font-size:10.4px;color:#555">Sheet 3</div>
<div class="a" style="left:259.8px;top:726px;width:1px;height:24px;background:#d8d8d8"></div>
<svg style="left:963px;top:730px" width="16" height="16" viewBox="0.000 -0.500 16.000 16.000"><circle cx="6" cy="6.5" r="2.8" fill="none" stroke="#555" stroke-width="1"/><path d="M1 14C1 11 3.2 9.6 6 9.6S11 11 11 14Z" fill="none" stroke="#555" stroke-width="1"/><rect x="9" y="0.6" width="6.4" height="4.8" rx="2.2" fill="#fff" stroke="#555" stroke-width=".9"/><path d="M10.3 3H14" stroke="#555" stroke-width=".8" stroke-dasharray=".9 .6"/></svg>
<div class="a" style="left:987px;top:726px;width:1px;height:24px;background:#d8d8d8"></div>
<svg style="left:995px;top:733px" width="12" height="10" viewBox="0.000 0.000 12.000 10.000"><rect x="0.5" y="0.5" width="11" height="9" rx="1" fill="none" stroke="#555" stroke-width="1"/><path d="M2 3H10M2 5H10M3.5 7.5H8.5" stroke="#555" stroke-width="1" stroke-dasharray="1 .8"/></svg>
<div class="a" style="left:1014.6px;top:726px;width:1px;height:24px;background:#d8d8d8"></div>
<svg style="left:1024px;top:732px" width="13" height="12" viewBox="-0.200 0.000 13.000 12.000"><rect x="0.6" y="0.6" width="10.8" height="10.8" fill="none" stroke="#555" stroke-width="1.2"/><rect x="3" y="3" width="6" height="6" fill="#888"/><path d="M0.6 3H3V0.6M9 0.6V3H11.4M11.4 9H9V11.4M3 11.4V9H0.6" fill="#555"/></svg>
<div class="a" style="left:1044.3px;top:726px;width:1px;height:24px;background:#d8d8d8"></div>
<svg style="left:1053px;top:732px" width="13" height="12" viewBox="-0.500 0.000 13.000 12.000"><rect x="0.6" y="0.6" width="10.8" height="10.8" fill="none" stroke="#555" stroke-width="1.1"/><circle cx="6" cy="6" r="3" fill="none" stroke="#555" stroke-width="1"/><path d="M6 1.8V3.5M6 8.5V10.2M1.8 6H3.5M8.5 6H10.2" stroke="#555" stroke-width="1"/></svg>
<div class="a" style="left:1083.2px;top:737.5px;width:8.8px;height:1.2px;background:#555"></div>
<div class="a" style="left:1098.5px;top:730.7px;width:44px;height:14.6px;background:#fff;border-radius:3px;box-shadow:0 0 0 0.5px #e0e0e0"></div>
<div class="t" style="left:1101.8px;top:733.6px;font-size:9.8px;color:#444">100%</div>
<div class="a" style="left:1129.6px;top:731.5px;width:1px;height:13px;background:#e6e6e6"></div>
<svg style="left:1133px;top:736px" width="7" height="4" viewBox="0.000 0.000 7.000 4.000"><path d="M0.5 0.5L3.5 3.5L6.5 0.5" fill="none" stroke="#777" stroke-width=".9"/></svg>
<svg style="left:1149px;top:733px" width="9" height="10" viewBox="-0.500 -0.800 9.000 10.000"><path d="M4.25 0V8.5M0 4.25H8.5" stroke="#444" stroke-width="1.1"/></svg>
<div class="a" style="left:1167.4px;top:725.8px;width:1px;height:24.2px;background:#d6d6d6"></div>
<svg style="left:1175px;top:731px" width="13" height="13" viewBox="-0.500 -0.800 13.000 13.000"><g fill="none" stroke="#333" stroke-width="1.1"><path d="M1 1L4.8 4.8M8 5L11.5 1M1 11L4.8 7.2M7.7 7.2L11.5 11"/></g><g fill="#333"><path d="M0.4 0.4H4.4L0.4 4.4Z"/><path d="M12.1 0.4H8.1L12.1 4.4Z"/><path d="M0.4 11.6H4.4L0.4 7.6Z"/><path d="M12.1 11.6H8.1L12.1 7.6Z"/></g></svg>
<svg style="left:1170px;top:134px" width="22" height="18" viewBox="0.000 0.000 22.000 18.000"><path d="M4.3 5.8H8Q9.2 5.8 8.6 7L4.8 13Q4.3 14.4 5.6 14.4H9.8Q10.8 14.4 11.4 13.2L15 7.5Q15.6 6.6 16.2 7.5L17.8 12.8Q18 14 16.8 13.6L12.5 11.8M9.6 10.6L11.8 7.2" fill="none" stroke="#3a3a3a" stroke-width="1.1" stroke-linejoin="round" stroke-linecap="round"/><circle cx="13" cy="4.9" r=".8" fill="#3a3a3a"/></svg>
<svg style="left:1174px;top:164px" width="14" height="14" viewBox="-0.500 0.000 14.000 14.000"><path d="M6.2 0.9C5.6 0.6 4.9 0.5 4.4 0.6C3.4 0.8 3 1.6 3 2.8V13.2M0.8 4.5H5.6" fill="none" stroke="#444" stroke-width="1.15"/><path d="M6.8 6L12.4 13M12.4 6L6.8 13" stroke="#444" stroke-width="1.15"/></svg>
<svg style="left:1174px;top:194px" width="14" height="14" viewBox="0.000 0.000 14.000 14.000"><path d="M1.5 0.7H12.8Q13.3 0.7 13.3 1.2V9Q13.3 9.5 12.8 9.5H4L0.7 12.8V1.5Q0.7 0.7 1.5 0.7Z" fill="none" stroke="#444" stroke-width="1.1"/><path d="M3.5 3.7H10M3.5 6.2H7.5" stroke="#444" stroke-width="1.1"/></svg>
<svg style="left:1175px;top:678px" width="13" height="13" viewBox="-0.500 -0.800 13.000 13.000"><path d="M5 10.8H1.3Q0.6 10.8 0.6 10.1V1.3Q0.6 0.6 1.3 0.6H8.7Q9.4 0.6 9.4 1.3V5" fill="none" stroke="#444" stroke-width="1.1"/><path d="M2.5 2.8H7.5M2.5 4.6H5.5" stroke="#444" stroke-width="1"/><ellipse cx="8.7" cy="8.4" rx="3.3" ry="2.2" fill="#f3f3f3" stroke="#444" stroke-width=".9"/><circle cx="8.7" cy="8.4" r="1" fill="#444"/></svg>
<svg style="left:1173px;top:700px" width="16" height="17" viewBox="0.000 -0.200 16.000 17.000"><circle cx="8" cy="8" r="3.9" fill="none" stroke="#333" stroke-width="1.3"/><path d="M8 4.1A3.9 3.9 0 0 1 8 11.9Z" fill="#333"/><g stroke="#444" stroke-width="1.1"><path d="M8 0V1.6M8 14.4V16M0 8H1.6M14.4 8H16M2.2 2.2L3.6 3.6M12.4 12.4L13.8 13.8M2.2 13.8L3.6 12.4M12.4 3.6L13.8 2.2"/></g></svg>
<svg style="left:0;top:0" width="1193" height="750" viewBox="0 0 1193 750"><path d="M1189.3 -0.3L1193.5 4.3" fill="none" stroke="#3ccf6a" stroke-width="1.8"/><path d="M1187.8 750.5Q1191 748.5 1193.5 744.8" fill="none" stroke="#3ccf6a" stroke-width="1.8"/><circle cx="0.5" cy="0.3" r="1" fill="#a8e6bc"/><circle cx="0.6" cy="749.6" r="1.6" fill="#3ccf6a"/></svg>


</body></html>
